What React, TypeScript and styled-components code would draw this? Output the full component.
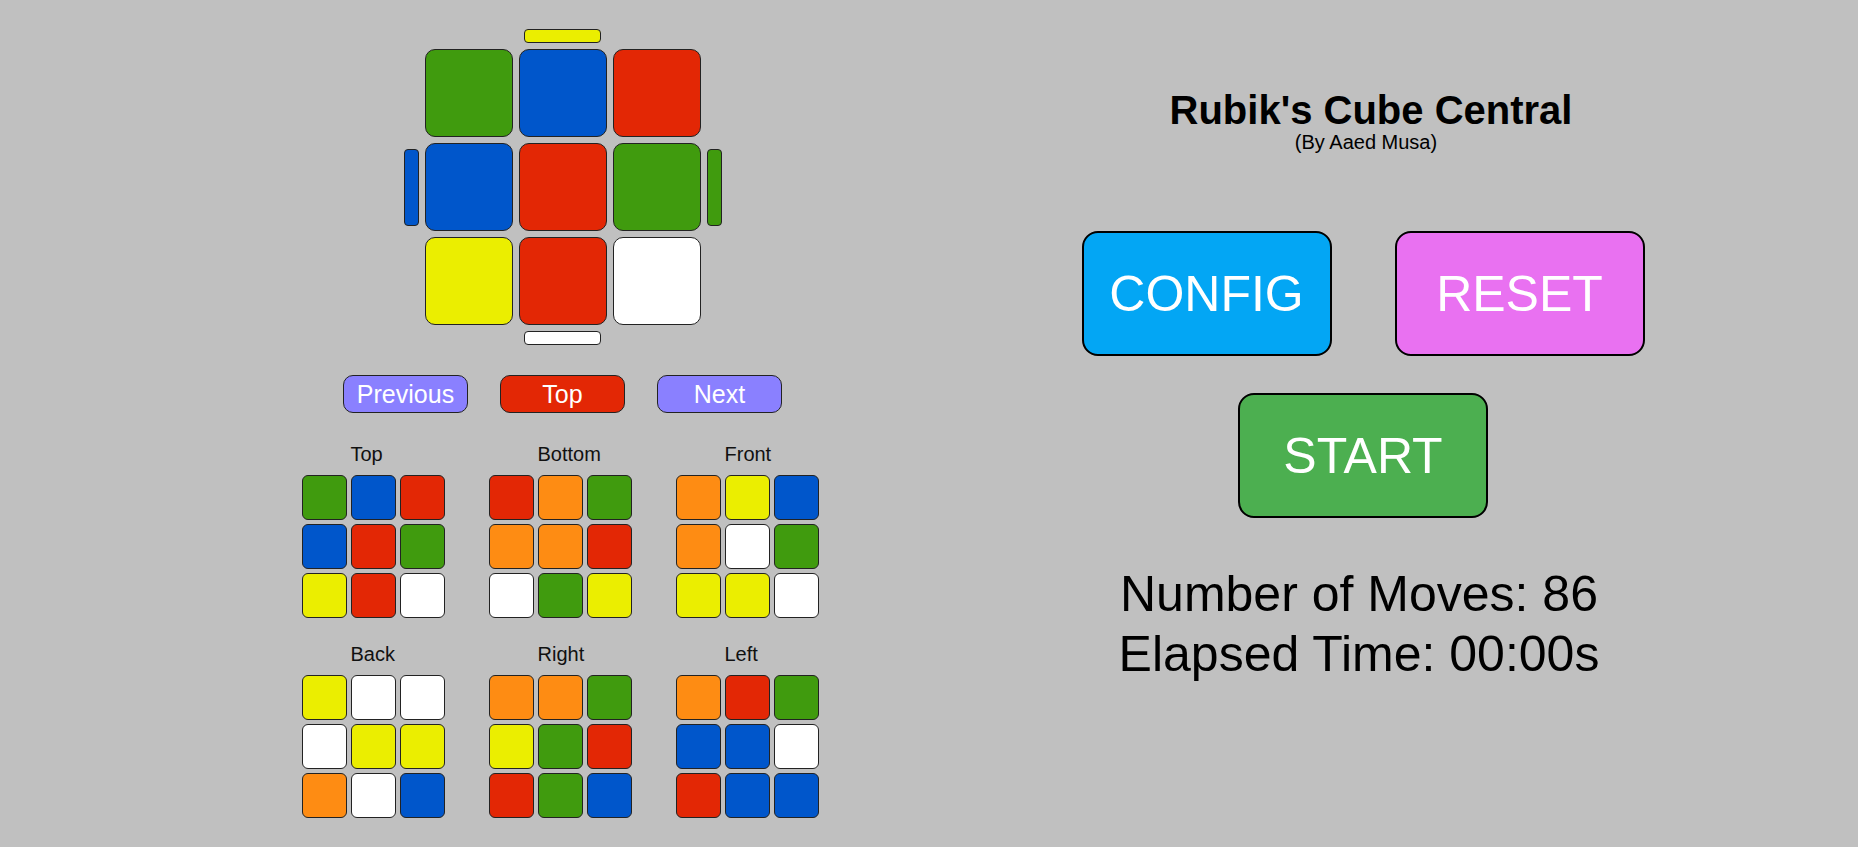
import React from "react";
import styled, { createGlobalStyle } from "styled-components";

type Color = "G" | "B" | "R" | "Y" | "O" | "W";

const COLORS: Record<Color, string> = {
  G: "#409b0e",
  B: "#0056cb",
  R: "#e32705",
  Y: "#ebee00",
  O: "#fe8c13",
  W: "#ffffff",
};

const GlobalStyle = createGlobalStyle`
  html, body {
    margin: 0;
    padding: 0;
    background: #c0c0c0;
    font-family: "Liberation Sans", Arial, sans-serif;
  }
`;

const Page = styled.div`
  display: flex;
  align-items: flex-start;
  gap: 223px;
  padding-left: 280px;
  min-height: 847px;
  box-sizing: border-box;
`;

const LeftPanel = styled.div`
  width: 560px;
  padding-top: 29px;
  display: flex;
  flex-direction: column;
  align-items: center;
`;

const CubeView = styled.div`
  display: grid;
  grid-template-columns: 15px repeat(3, 88px) 15px;
  grid-template-rows: 14px repeat(3, 88px) 14px;
  gap: 6px;
  margin-left: 5px;
`;

const Cell = styled.div<{ $col: number; $row: number }>`
  grid-column: ${(p) => p.$col};
  grid-row: ${(p) => p.$row};
  display: flex;
  align-items: center;
  justify-content: center;
`;

const BigSticker = styled.div<{ $color: string }>`
  width: 100%;
  height: 100%;
  box-sizing: border-box;
  background: ${(p) => p.$color};
  border: 1px solid #222;
  border-radius: 10px;
`;

const EdgeBar = styled.div<{ $color: string; $vertical?: boolean }>`
  width: ${(p) => (p.$vertical ? "15px" : "77px")};
  height: ${(p) => (p.$vertical ? "77px" : "14px")};
  box-sizing: border-box;
  background: ${(p) => p.$color};
  border: 1px solid #222;
  border-radius: 4px;
`;

const NavRow = styled.div`
  display: flex;
  gap: 32px;
  margin-top: 30px;
  margin-left: 5px;
`;

const NavButton = styled.button<{ $bg: string }>`
  width: 125px;
  height: 38px;
  box-sizing: border-box;
  background: ${(p) => p.$bg};
  border: 1px solid #222;
  border-radius: 10px;
  color: #fff;
  font-family: "Liberation Sans", Arial, sans-serif;
  font-size: 25px;
  padding: 0;
  cursor: pointer;
`;

const FacesGrid = styled.div`
  display: grid;
  grid-template-columns: repeat(3, 143px);
  column-gap: 44px;
  row-gap: 25px;
  margin-top: 30px;
`;

const Face = styled.div`
  display: flex;
  flex-direction: column;
  gap: 9px;
`;

const FaceLabel = styled.div`
  padding-left: 49px;
  font-size: 20px;
  line-height: 23px;
  color: #111;
`;

const MiniGrid = styled.div`
  display: grid;
  grid-template-columns: repeat(3, 45px);
  grid-auto-rows: 45px;
  column-gap: 4px;
  row-gap: 4px;
`;

const MiniSticker = styled.div<{ $color: string }>`
  box-sizing: border-box;
  background: ${(p) => p.$color};
  border: 1px solid #222;
  border-radius: 6px;
`;

const RightPanel = styled.div`
  width: 600px;
  padding-top: 90px;
  display: flex;
  flex-direction: column;
  align-items: center;
`;

const Title = styled.h1`
  margin: 0;
  padding-left: 16px;
  font-size: 40px;
  line-height: 40px;
  font-weight: 700;
  color: #000;
`;

const Subtitle = styled.div`
  margin-top: 2px;
  padding-left: 6px;
  font-size: 20px;
  line-height: 20px;
  color: #000;
`;

const ActionRow = styled.div`
  display: flex;
  justify-content: center;
  gap: 63px;
  margin-top: 79px;
`;

const ActionButton = styled.button<{ $bg: string }>`
  width: 250px;
  height: 125px;
  box-sizing: border-box;
  background: ${(p) => p.$bg};
  border: 2px solid #000;
  border-radius: 16px;
  color: #fff;
  font-family: "Liberation Sans", Arial, sans-serif;
  font-size: 50px;
  padding: 0;
  cursor: pointer;
`;

const StartRow = styled(ActionRow)`
  margin-top: 37px;
`;

const Stats = styled.div`
  margin-top: 46px;
  margin-right: 8px;
  font-size: 50px;
  line-height: 60px;
  color: #000;
  text-align: center;
`;

const parse = (s: string) => s.split("") as Color[];

const cubeTop = parse("GBRBRGYRW");

const faces: { name: string; stickers: Color[] }[] = [
  { name: "Top", stickers: parse("GBRBRGYRW") },
  { name: "Bottom", stickers: parse("ROGOORWGY") },
  { name: "Front", stickers: parse("OYBOWGYYW") },
  { name: "Back", stickers: parse("YWWWYYOWB") },
  { name: "Right", stickers: parse("OOGYGRRGB") },
  { name: "Left", stickers: parse("ORGBBWRBB") },
];

export default function App() {
  return (
    <>
      <GlobalStyle />
      <Page>
        <LeftPanel>
          <CubeView>
            <Cell $col={3} $row={1}>
              <EdgeBar $color={COLORS.Y} />
            </Cell>
            <Cell $col={1} $row={3}>
              <EdgeBar $color={COLORS.B} $vertical />
            </Cell>
            <Cell $col={5} $row={3}>
              <EdgeBar $color={COLORS.G} $vertical />
            </Cell>
            <Cell $col={3} $row={5}>
              <EdgeBar $color={COLORS.W} />
            </Cell>
            {cubeTop.map((c, i) => (
              <Cell key={i} $col={(i % 3) + 2} $row={Math.floor(i / 3) + 2}>
                <BigSticker $color={COLORS[c]} />
              </Cell>
            ))}
          </CubeView>

          <NavRow>
            <NavButton $bg="#8a80ff">Previous</NavButton>
            <NavButton $bg={COLORS.R}>Top</NavButton>
            <NavButton $bg="#8a80ff">Next</NavButton>
          </NavRow>

          <FacesGrid>
            {faces.map((f) => (
              <Face key={f.name}>
                <FaceLabel>{f.name}</FaceLabel>
                <MiniGrid>
                  {f.stickers.map((c, i) => (
                    <MiniSticker key={i} $color={COLORS[c]} />
                  ))}
                </MiniGrid>
              </Face>
            ))}
          </FacesGrid>
        </LeftPanel>

        <RightPanel>
          <Title>Rubik's Cube Central</Title>
          <Subtitle>(By Aaed Musa)</Subtitle>
          <ActionRow>
            <ActionButton $bg="#03a6f4">CONFIG</ActionButton>
            <ActionButton $bg="#e971f1">RESET</ActionButton>
          </ActionRow>
          <StartRow>
            <ActionButton $bg="#4caf50">START</ActionButton>
          </StartRow>
          <Stats>
            <div>Number of Moves: 86</div>
            <div>Elapsed Time: 00:00s</div>
          </Stats>
        </RightPanel>
      </Page>
    </>
  );
}
